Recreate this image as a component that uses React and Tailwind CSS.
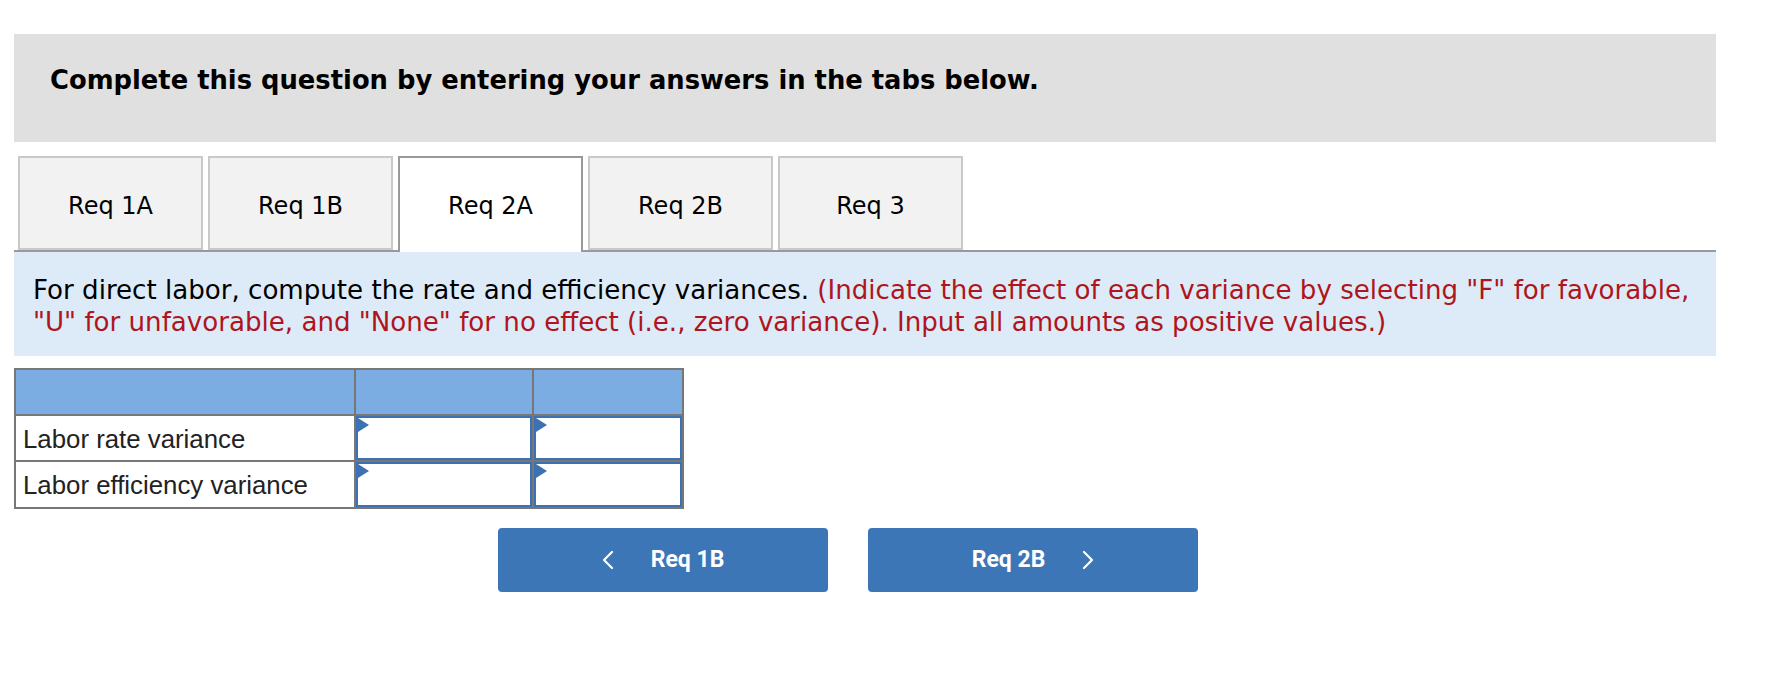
import React from "react";

const Chevron = ({ dir }) => (
  <svg width="12" height="20" viewBox="0 0 12 20" fill="none" className="block">
    {dir === "left" ? (
      <polyline points="10,2 2,10 10,18" stroke="white" strokeWidth="2.2" strokeLinecap="round" strokeLinejoin="round" />
    ) : (
      <polyline points="2,2 10,10 2,18" stroke="white" strokeWidth="2.2" strokeLinecap="round" strokeLinejoin="round" />
    )}
  </svg>
);

const InputCell = () => (
  <div className="relative h-full w-full border-2 border-[#3c72b4] bg-white">
    <svg width="11" height="14" viewBox="0 0 11 14" className="absolute left-0 top-0">
      <polygon points="0,0 11,7 0,14" fill="#3c72b4" />
    </svg>
  </div>
);

export default function App() {
  const tabs = ["Req 1A", "Req 1B", "Req 2A", "Req 2B", "Req 3"];
  return (
    <div className="w-full h-[682px] bg-white pt-[34px] px-[14px]" style={{ fontFamily: '"DejaVu Sans", Verdana, sans-serif' }}>
      <div className="w-[1702px]">
        {/* Header */}
        <div className="h-[108px] bg-[#e0e0e0] pl-[36px] pt-[31px]">
          <h1 className="text-[25.8px] font-bold leading-[31px] text-black">
            Complete this question by entering your answers in the tabs below.
          </h1>
        </div>

        {/* Tabs */}
        <div className="mt-[14px] flex items-end gap-[5px] pl-[4px] border-b-2 border-[#9a9a9a]">
          {tabs.map((t) =>
            t === "Req 2A" ? (
              <div
                key={t}
                className="relative z-10 -mb-[2px] flex h-[96px] w-[185px] items-center justify-center border-2 border-b-0 border-[#999999] bg-white pt-[2px] text-[24px] text-black"
              >
                {t}
              </div>
            ) : (
              <div
                key={t}
                className="flex h-[94px] w-[185px] items-center justify-center border-2 border-[#c9c9c9] bg-[#f2f2f2] pt-[6px] text-[24px] text-black"
              >
                {t}
              </div>
            )
          )}
        </div>

        {/* Instructions */}
        <div className="h-[104px] bg-[#dcebf7] pl-[19px] pt-[23px] text-[26.1px] leading-[31.5px]">
          <span className="text-black">For direct labor, compute the rate and efficiency variances. </span>
          <span className="text-[#b0141c]">
            (Indicate the effect of each variance by selecting "F" for favorable,
            <br />
            "U" for unfavorable, and "None" for no effect (i.e., zero variance). Input all amounts as positive values.)
          </span>
        </div>

        {/* Table */}
        <div
          className="mt-[12px] grid w-[670px] grid-cols-[338px_176px_148px] grid-rows-[44px_44px_45px] gap-[2px] bg-[#777777] p-[2px]"
          style={{ fontFamily: '"Liberation Sans", Arial, sans-serif' }}
        >
          <div className="bg-[#7badE2]" />
          <div className="bg-[#7badE2]" />
          <div className="bg-[#7badE2]" />

          <div className="flex items-center bg-white pl-[7px] pt-[2px] text-[25.8px] text-[#222]">Labor rate variance</div>
          <InputCell />
          <InputCell />

          <div className="flex items-center bg-white pl-[7px] pt-[2px] text-[25.8px] text-[#222]">Labor efficiency variance</div>
          <InputCell />
          <InputCell />
        </div>

        {/* Buttons */}
        <div className="mt-[19px] flex gap-[40px] pl-[484px]" style={{ fontFamily: 'Roboto, "Liberation Sans", sans-serif' }}>
          <button className="flex h-[64px] w-[330px] items-center justify-center gap-[37px] rounded-[4px] bg-[#3d76b7] text-[23px] font-bold text-white">
            <Chevron dir="left" />
            <span>Req 1B</span>
          </button>
          <button className="flex h-[64px] w-[330px] items-center justify-center gap-[37px] rounded-[4px] bg-[#3d76b7] text-[23px] font-bold text-white">
            <span>Req 2B</span>
            <Chevron dir="right" />
          </button>
        </div>
      </div>
    </div>
  );
}
